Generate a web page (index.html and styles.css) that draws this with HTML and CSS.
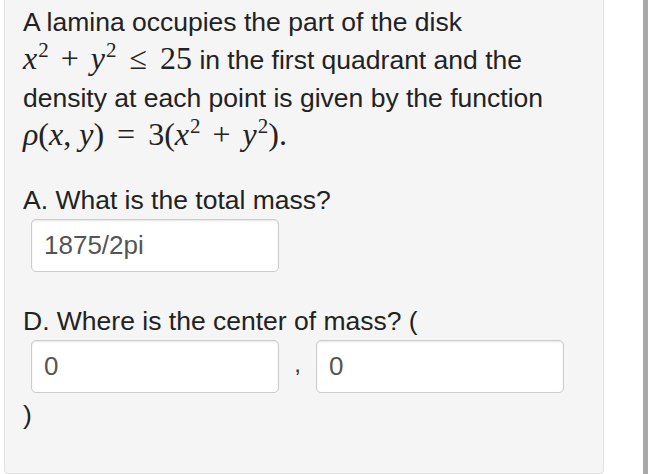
FILE: index.html
```html
<!DOCTYPE html>
<html lang="en">
<head>
    <meta charset="UTF-8">
    <title>Lamina</title>
    <link rel="stylesheet" href="styles.css">
</head>
<body>
    <div class="page">
        <div class="panel">
            <p class="question">
                A lamina occupies the part of the disk<br>
                <span class="math"><i>x</i><sup>2</sup><span class="op">+</span><i>y</i><sup>2</sup><span class="rel">&le;</span>25</span> in the first quadrant and the<br>
                density at each point is given by the function<br>
                <span class="math"><i>&rho;</i>(<i>x</i>,<span class="sep"></span><i>y</i>)<span class="rel">=</span>3(<i>x</i><sup>2</sup><span class="op">+</span><i>y</i><sup>2</sup>).</span>
            </p>

            <div class="part">A. What is the total mass?</div>
            <div class="answer">
                <input type="text" value="1875/2pi">
            </div>

            <div class="part part-d">D. Where is the center of mass? (</div>
            <div class="answer">
                <input type="text" value="0">
                <span class="comma">,</span>
                <input type="text" value="0">
            </div>
            <div class="close">)</div>
        </div>
        <div class="scrollbar"></div>
    </div>
</body>
</html>
```

FILE: styles.css
```css
body {
    margin: 0;
    background-color: #fff;
    font-family: "Liberation Sans", Arial, sans-serif;
    color: #222;
}

.page {
    display: flex;
    align-items: flex-start;
    height: 474px;
}

.panel {
    margin-left: 4px;
    width: 580px;
    height: 470px;
    padding: 3px 0 0 18px;
    background-color: #f5f5f5;
    border: 1px solid #e3e3e3;
    border-top: none;
    border-radius: 0 0 4px 4px;
}

.question {
    margin: 0;
    font-size: 26.5px;
    line-height: 38px;
}

/* math set in a serif, like the rendered formulas */
.math {
    font-family: "Liberation Serif", "Times New Roman", serif;
    font-size: 32px;
    line-height: 0;
}

.math sup {
    font-size: 21px;
    line-height: 0;
    vertical-align: 12px;
    margin-left: 1px;
}

.math .op {
    margin: 0 12px;
}

.math .rel {
    margin: 0 13px;
}

.math .sep {
    display: inline-block;
    width: 8px;
}

.part {
    margin-top: 26px;
    font-size: 26.5px;
    line-height: 38px;
}

.part-d {
    margin-top: 30px;
}

.answer {
    display: flex;
    align-items: center;
    padding-left: 8px;
}

.answer input {
    width: 248px;
    height: 53px;
    box-sizing: border-box;
    padding: 0 12px;
    font-family: "Liberation Sans", Arial, sans-serif;
    font-size: 26px;
    color: #555;
    background-color: #fff;
    border: 1px solid #ccc;
    border-radius: 5px;
    box-shadow: inset 0 1px 2px rgba(0, 0, 0, 0.1);
}

.comma {
    width: 37px;
    padding-bottom: 5px;
    text-align: center;
    font-size: 24px;
    line-height: 30px;
    color: #333;
}

.close {
    margin-top: 3px;
    font-size: 26.5px;
    line-height: 38px;
}

.scrollbar {
    margin-left: 39px;
    width: 5px;
    height: 474px;
    background-color: #a8a8a8;
}
```
